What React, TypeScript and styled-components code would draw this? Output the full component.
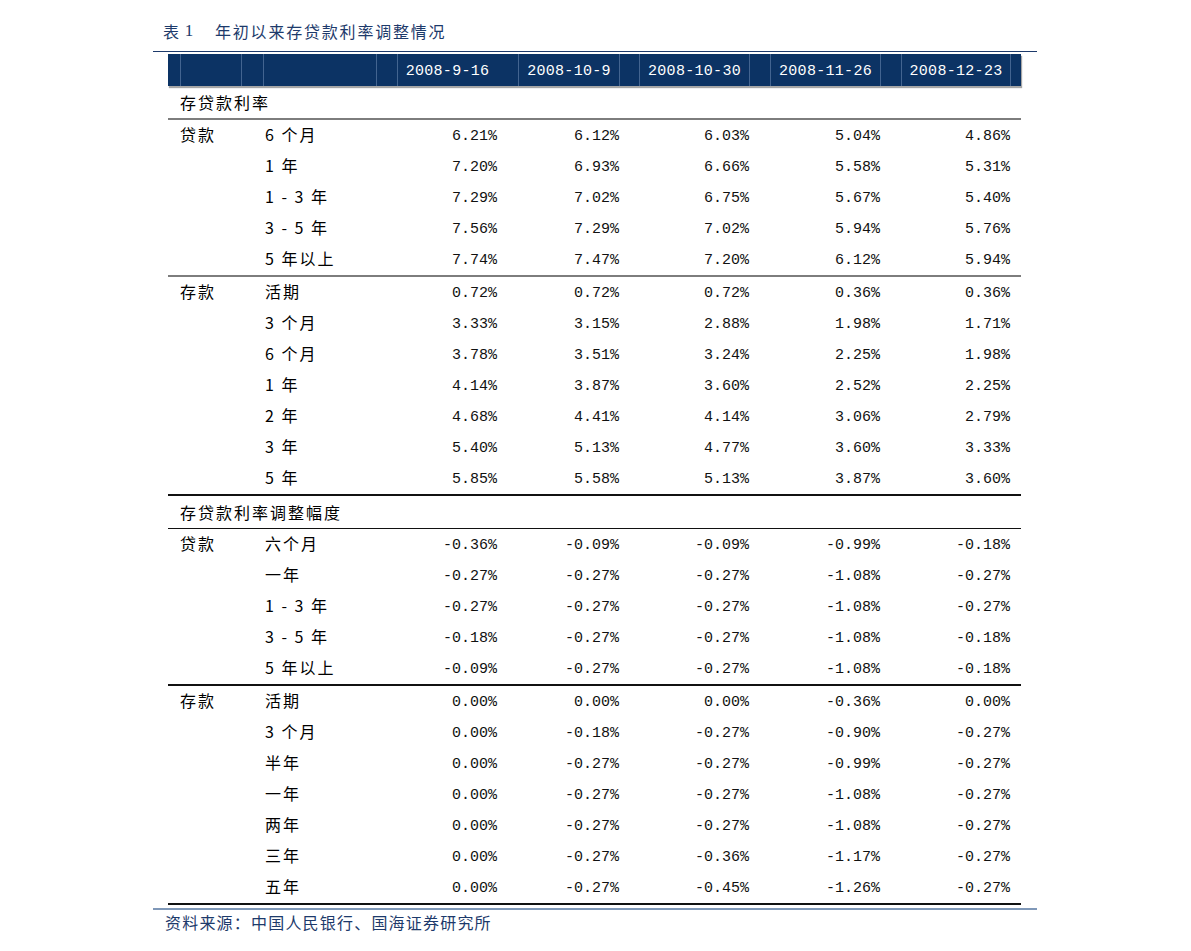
import React from "react";
import styled, { createGlobalStyle } from "styled-components";

const GlobalStyle = createGlobalStyle`
  html, body { margin: 0; padding: 0; background: #ffffff; }
  body { font-family: "Noto Sans CJK SC", sans-serif; color: #000; }
`;

const NAVY = "#1d3a6b";
const CJK = `"Noto Sans CJK SC", "Noto Sans", sans-serif`;
const MONO = `"Liberation Mono", "Noto Sans CJK SC", monospace`;

const Page = styled.div`
  width: 884px;
  padding-left: 153px;
`;

const TitleRow = styled.div`
  box-sizing: border-box;
  height: 52px;
  padding-top: 20px;
  padding-left: 10px;
  border-bottom: 1px solid ${NAVY};
  display: flex;
  align-items: flex-start;
  color: ${NAVY};
  font-family: ${CJK};
  font-size: 16px;
  line-height: 22px;
  letter-spacing: 1.8px;
`;

const TitleNo = styled.span`
  width: 52px;
  display: inline-flex;
  gap: 4px;
`;

const TitleNum = styled.span`
  font-family: "Liberation Serif", serif;
  font-size: 17px;
`;

const Table = styled.div`
  margin: 2px 16px 0 15px;
  border-bottom: 2px solid #111;
`;

const HeaderBar = styled.div`
  display: grid;
  grid-template-columns: 13px 61px 22px 113px 142px 101px 20px 110px 21px 110px 21px 109px 10px;
  height: 32px;
  background: #0c3364;
  box-shadow: 1px 2px 1px rgba(0, 0, 0, 0.35);
`;

const HeadCell = styled.div<{ $split?: boolean }>`
  box-sizing: border-box;
  display: flex;
  align-items: center;
  justify-content: center;
  padding-top: 2px;
  color: #ffffff;
  font-family: ${MONO};
  font-size: 15px;
  letter-spacing: 0.3px;
  border-right: 1px solid rgba(150, 175, 210, 0.4);
  background: ${(p) =>
    p.$split
      ? "linear-gradient(to right, transparent 20px, rgba(150,175,210,0.4) 20px, rgba(150,175,210,0.4) 21px, transparent 21px)"
      : "none"};
  &:last-child { border-right: none; }
`;

type Line = "gray" | "thick" | "thin" | "none";

const lineCss = (l?: Line) =>
  l === "gray"
    ? "2px solid #7d7d7d"
    : l === "thick"
    ? "2px solid #111"
    : l === "thin"
    ? "1px solid #111"
    : "none";

const SectionRow = styled.div<{ $top?: Line; $bottom?: Line }>`
  height: 32px;
  display: flex;
  align-items: center;
  padding-left: 12px;
  font-family: ${CJK};
  font-size: 16px;
  letter-spacing: 2px;
  border-top: ${(p) => lineCss(p.$top)};
  border-bottom: ${(p) => lineCss(p.$bottom)};
`;

const Group = styled.div<{ $top?: Line }>`
  border-top: ${(p) => lineCss(p.$top)};
`;

const Row = styled.div`
  box-sizing: border-box;
  display: grid;
  grid-template-columns: 96px 113px 121px 122px 130px 131px 130px 10px;
  height: 31px;
  padding-bottom: 4px;
  align-items: center;
`;

const GroupLabel = styled.div`
  padding-left: 12px;
  font-family: ${CJK};
  font-size: 16px;
  letter-spacing: 2px;
`;

const ItemLabel = styled.div`
  padding-left: 1px;
  font-family: ${CJK};
  font-size: 16px;
  letter-spacing: 2px;
  white-space: pre;
`;

const Value = styled.div`
  text-align: right;
  padding-top: 6px;
  padding-right: 1px;
  font-family: ${MONO};
  font-size: 15px;
  color: #111;
`;

const FooterLine = styled.div`
  margin-top: 3px;
  height: 2px;
  background: #7f98b8;
`;

const Footer = styled.div`
  padding: 1px 0 0 12px;
  color: ${NAVY};
  font-family: ${CJK};
  font-size: 16px;
  line-height: 22px;
  letter-spacing: 1.2px;
`;

type DataRow = [string, number[]];
type DataGroup = { label: string; rows: DataRow[] };

const fmt = (v: number) => `${v.toFixed(2)}%`;

const rates: DataGroup[] = [
  {
    label: "贷款",
    rows: [
      ["6 个月", [6.21, 6.12, 6.03, 5.04, 4.86]],
      ["1 年", [7.2, 6.93, 6.66, 5.58, 5.31]],
      ["1 - 3 年", [7.29, 7.02, 6.75, 5.67, 5.4]],
      ["3 - 5 年", [7.56, 7.29, 7.02, 5.94, 5.76]],
      ["5 年以上", [7.74, 7.47, 7.2, 6.12, 5.94]],
    ],
  },
  {
    label: "存款",
    rows: [
      ["活期", [0.72, 0.72, 0.72, 0.36, 0.36]],
      ["3 个月", [3.33, 3.15, 2.88, 1.98, 1.71]],
      ["6 个月", [3.78, 3.51, 3.24, 2.25, 1.98]],
      ["1 年", [4.14, 3.87, 3.6, 2.52, 2.25]],
      ["2 年", [4.68, 4.41, 4.14, 3.06, 2.79]],
      ["3 年", [5.4, 5.13, 4.77, 3.6, 3.33]],
      ["5 年", [5.85, 5.58, 5.13, 3.87, 3.6]],
    ],
  },
];

const changes: DataGroup[] = [
  {
    label: "贷款",
    rows: [
      ["六个月", [-0.36, -0.09, -0.09, -0.99, -0.18]],
      ["一年", [-0.27, -0.27, -0.27, -1.08, -0.27]],
      ["1 - 3 年", [-0.27, -0.27, -0.27, -1.08, -0.27]],
      ["3 - 5 年", [-0.18, -0.27, -0.27, -1.08, -0.18]],
      ["5 年以上", [-0.09, -0.27, -0.27, -1.08, -0.18]],
    ],
  },
  {
    label: "存款",
    rows: [
      ["活期", [0.0, 0.0, 0.0, -0.36, 0.0]],
      ["3 个月", [0.0, -0.18, -0.27, -0.9, -0.27]],
      ["半年", [0.0, -0.27, -0.27, -0.99, -0.27]],
      ["一年", [0.0, -0.27, -0.27, -1.08, -0.27]],
      ["两年", [0.0, -0.27, -0.27, -1.08, -0.27]],
      ["三年", [0.0, -0.27, -0.36, -1.17, -0.27]],
      ["五年", [0.0, -0.27, -0.45, -1.26, -0.27]],
    ],
  },
];

const GroupBlock: React.FC<{ group: DataGroup; top?: Line }> = ({ group, top }) => (
  <Group $top={top}>
    {group.rows.map(([name, vals], i) => (
      <Row key={name + i}>
        <GroupLabel>{i === 0 ? group.label : ""}</GroupLabel>
        <ItemLabel>{name}</ItemLabel>
        {vals.map((v, j) => (
          <Value key={j}>{fmt(v)}</Value>
        ))}
        <div />
      </Row>
    ))}
  </Group>
);

export default function App() {
  return (
    <>
      <GlobalStyle />
      <Page>
        <TitleRow>
          <TitleNo>
            <span>表</span>
            <TitleNum>1</TitleNum>
          </TitleNo>
          <span>年初以来存贷款利率调整情况</span>
        </TitleRow>
        <Table>
          <HeaderBar>
            <HeadCell />
            <HeadCell />
            <HeadCell />
            <HeadCell />
            <HeadCell $split>2008-9-16</HeadCell>
            <HeadCell>2008-10-9</HeadCell>
            <HeadCell />
            <HeadCell>2008-10-30</HeadCell>
            <HeadCell />
            <HeadCell>2008-11-26</HeadCell>
            <HeadCell />
            <HeadCell>2008-12-23</HeadCell>
            <HeadCell />
          </HeaderBar>
          <SectionRow $bottom="gray">存贷款利率</SectionRow>
          <GroupBlock group={rates[0]} />
          <GroupBlock group={rates[1]} top="gray" />
          <SectionRow $top="thick" $bottom="thin">存贷款利率调整幅度</SectionRow>
          <GroupBlock group={changes[0]} />
          <GroupBlock group={changes[1]} top="thick" />
        </Table>
        <FooterLine />
        <Footer>资料来源：中国人民银行、国海证券研究所</Footer>
      </Page>
    </>
  );
}
